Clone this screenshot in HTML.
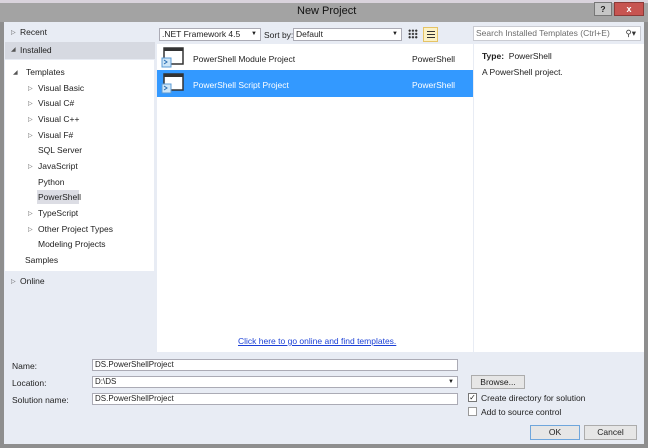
<!DOCTYPE html>
<html><head><style>
*{margin:0;padding:0;box-sizing:border-box}
body{width:648px;height:448px;background:#8e8e8e;font-family:"Liberation Sans",sans-serif;font-size:8.5px;color:#1e1e1e;position:relative;overflow:hidden}
.a{position:absolute}
.tb{left:0;top:0;width:648px;height:22px;background:#a2a2a2}
.inp{background:#fff;border:1px solid #ababb5;height:12px;line-height:10px;padding-left:2px;font-size:8px}
.btn{background:#e6e6e6;border:1px solid #acacac;text-align:center;font-size:8.5px}
.tri{font-size:6px;color:#555}
</style></head><body>
<div class="a tb"></div>
<div class="a" style="left:0;top:0;width:648px;height:3px;background:#d9d3dc"></div>
<div class="a" style="left:0;top:3px;width:648px;height:19px;background:#a3a3a3"></div>
<div class="a" style="left:297px;top:5px;font-size:11px;color:#111">New Project</div>
<div class="a btn" style="left:594px;top:2px;width:18px;height:14px;background:#c6c6c6;border-color:#777;font-weight:bold;line-height:12px">?</div>
<div class="a" style="left:614px;top:2px;width:30px;height:14px;background:#c75451;color:#fff;font-weight:bold;text-align:center;line-height:13px;font-size:9px;border:1px solid #8c3a38">x</div>

<div class="a" style="left:4px;top:22px;width:640px;height:422px;background:#e8ecf4"></div>
<!-- left panel -->
<div class="a" style="left:5px;top:42px;width:150px;height:17px;background:#d6d9e1"></div>
<div class="a" style="left:5px;top:60px;width:149px;height:211px;background:#fff"></div>
<div class="a" style="left:5px;top:23px;line-height:1">
</div>
<div class="a tri" style="left:11px;top:29px">▷</div><div class="a" style="left:20px;top:27px">Recent</div>
<div class="a tri" style="left:11px;top:46px">◢</div><div class="a" style="left:20px;top:45px">Installed</div>
<div class="a tri" style="left:13px;top:69px">◢</div><div class="a" style="left:26px;top:67px">Templates</div>
<div class="a tri" style="left:28px;top:85px">▷</div><div class="a" style="left:38px;top:83px">Visual Basic</div>
<div class="a tri" style="left:28px;top:100px">▷</div><div class="a" style="left:38px;top:98px">Visual C#</div>
<div class="a tri" style="left:28px;top:116px">▷</div><div class="a" style="left:38px;top:114px">Visual C++</div>
<div class="a tri" style="left:28px;top:132px">▷</div><div class="a" style="left:38px;top:130px">Visual F#</div>
<div class="a" style="left:38px;top:145px">SQL Server</div>
<div class="a tri" style="left:28px;top:163px">▷</div><div class="a" style="left:38px;top:161px">JavaScript</div>
<div class="a" style="left:38px;top:177px">Python</div>
<div class="a" style="left:37px;top:190px;width:42px;height:14px;background:#dcdde4"></div>
<div class="a" style="left:38px;top:192px">PowerShell</div>
<div class="a tri" style="left:28px;top:210px">▷</div><div class="a" style="left:38px;top:208px">TypeScript</div>
<div class="a tri" style="left:28px;top:226px">▷</div><div class="a" style="left:38px;top:224px">Other Project Types</div>
<div class="a" style="left:38px;top:239px">Modeling Projects</div>
<div class="a" style="left:25px;top:255px">Samples</div>
<div class="a tri" style="left:11px;top:278px">▷</div><div class="a" style="left:20px;top:276px">Online</div>

<!-- toolbar -->
<div class="a inp" style="left:159px;top:28px;width:102px;height:13px;font-size:8.5px">.NET Framework 4.5<span style="position:absolute;right:3px;font-size:6px">▼</span></div>
<div class="a" style="left:264px;top:30px">Sort by:</div>
<div class="a inp" style="left:293px;top:28px;width:109px;height:13px;font-size:8.5px">Default<span style="position:absolute;right:3px;font-size:6px">▼</span></div>
<div class="a" style="left:408px;top:29px;width:10px;height:10px;background:radial-gradient(circle,#333 1px,transparent 1.2px) 0 0/3.3px 3.3px"></div>
<div class="a" style="left:423px;top:27px;width:15px;height:15px;background:#fbf1c5;border:1px solid #e5c365"></div>
<div class="a" style="left:427px;top:31px;width:8px;height:7px;background:repeating-linear-gradient(#333 0 1px,transparent 1px 3px)"></div>
<div class="a inp" style="left:473px;top:26px;width:168px;height:15px;line-height:13px;color:#6d6d6d;font-size:8.5px;border-color:#c9cbd2">Search Installed Templates (Ctrl+E)<span style="position:absolute;right:4px;color:#333">⚲▾</span></div>

<!-- center list -->
<div class="a" style="left:157px;top:44px;width:316px;height:308px;background:#fff"></div>
<div class="a" style="left:157px;top:70px;width:316px;height:27px;background:#3399ff"></div>
<svg class="a" style="left:161px;top:47px" width="24" height="22"><rect x="3" y="1" width="19" height="16" fill="#fff" stroke="#333" stroke-width="1.5"/><rect x="3" y="1" width="19" height="3" fill="#333"/><rect x="1" y="11" width="9" height="9" fill="#cfe6f7" stroke="#5b9bd5"/><path d="M3 13l3 2-3 2" stroke="#2a6cb0" fill="none"/></svg>
<svg class="a" style="left:161px;top:73px" width="24" height="22"><rect x="3" y="1" width="19" height="16" fill="#fff" stroke="#333" stroke-width="1.5"/><rect x="3" y="1" width="19" height="3" fill="#333"/><rect x="1" y="11" width="9" height="9" fill="#cfe6f7" stroke="#5b9bd5"/><path d="M3 13l3 2-3 2" stroke="#2a6cb0" fill="none"/></svg>
<div class="a" style="left:193px;top:54px">PowerShell Module Project</div>
<div class="a" style="left:412px;top:54px">PowerShell</div>
<div class="a" style="left:193px;top:80px;color:#fff">PowerShell Script Project</div>
<div class="a" style="left:412px;top:80px;color:#fff">PowerShell</div>
<div class="a" style="left:238px;top:336px;color:#1a3fd6;text-decoration:underline">Click here to go online and find templates.</div>

<!-- right -->
<div class="a" style="left:474px;top:44px;width:170px;height:308px;background:#fff"></div>
<div class="a" style="left:482px;top:51px"><b>Type:</b>&nbsp; PowerShell</div>
<div class="a" style="left:482px;top:67px">A PowerShell project.</div>

<!-- bottom -->
<div class="a" style="left:12px;top:361px">Name:</div>
<div class="a inp" style="left:92px;top:359px;width:366px">DS.PowerShellProject</div>
<div class="a" style="left:12px;top:378px">Location:</div>
<div class="a inp" style="left:92px;top:376px;width:366px">D:\DS<span style="position:absolute;right:3px;font-size:6px">▼</span></div>
<div class="a btn" style="left:471px;top:375px;width:54px;height:14px;line-height:12px">Browse...</div>
<div class="a" style="left:12px;top:395px">Solution name:</div>
<div class="a inp" style="left:92px;top:393px;width:366px">DS.PowerShellProject</div>
<div class="a" style="left:468px;top:393px;width:9px;height:9px;background:#fff;border:1px solid #777;font-size:8px;line-height:7px;text-align:center">✓</div>
<div class="a" style="left:481px;top:393px">Create directory for solution</div>
<div class="a" style="left:468px;top:407px;width:9px;height:9px;background:#fff;border:1px solid #999"></div>
<div class="a" style="left:481px;top:407px">Add to source control</div>
<div class="a btn" style="left:530px;top:425px;width:50px;height:15px;line-height:13px;border-color:#6fa6dc">OK</div>
<div class="a btn" style="left:584px;top:425px;width:53px;height:15px;line-height:13px">Cancel</div>
</body></html>
